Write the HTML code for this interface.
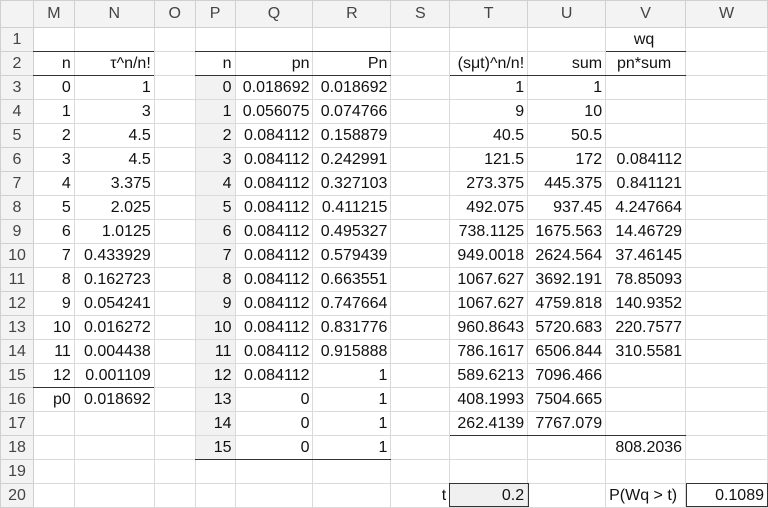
<!DOCTYPE html>
<html><head><meta charset="utf-8"><style>
body{margin:0;width:768px;height:506px;overflow:hidden;background:#fff;font-family:"Liberation Sans",sans-serif;}
table{border-collapse:collapse;table-layout:fixed;position:absolute;left:0;top:0;}
td{height:23px;border:1px solid #dadada;padding:0 3px 0 0;text-align:right;font-size:16px;color:#111;white-space:nowrap;overflow:hidden;line-height:22px;}
tr.h td{height:26px;background:#f3f3f3;color:#444;text-align:center;border-color:#d0d0d0;font-size:16px;padding:0;}
td.r{background:#f3f3f3;color:#444;text-align:center;border-color:#d0d0d0;padding:0;font-size:16px;}
td.p{background:#f2f2f2;}
td.c{text-align:center;}
.l{position:absolute;height:1px;background:#333;}
.b{position:absolute;border:1px solid #333;box-sizing:border-box;}
</style></head><body>
<table>
<colgroup><col style="width:33px"><col style="width:41px"><col style="width:80px"><col style="width:41px"><col style="width:40px"><col style="width:78px"><col style="width:78px"><col style="width:59px"><col style="width:78px"><col style="width:78px"><col style="width:80px"><col style="width:82px"></colgroup>
<tr class="h"><td></td><td>M</td><td>N</td><td>O</td><td>P</td><td>Q</td><td>R</td><td>S</td><td>T</td><td>U</td><td>V</td><td>W</td></tr>
<tr><td class="r">1</td><td></td><td></td><td></td><td></td><td></td><td></td><td></td><td></td><td></td><td class="c">wq</td><td></td></tr>
<tr><td class="r">2</td><td>n</td><td>τ^n/n!</td><td></td><td>n</td><td>pn</td><td>Pn</td><td></td><td>(sμt)^n/n!</td><td>sum</td><td class="c">pn*sum</td><td></td></tr>
<tr><td class="r">3</td><td>0</td><td>1</td><td></td><td class="p">0</td><td>0.018692</td><td>0.018692</td><td></td><td>1</td><td>1</td><td></td><td></td></tr>
<tr><td class="r">4</td><td>1</td><td>3</td><td></td><td class="p">1</td><td>0.056075</td><td>0.074766</td><td></td><td>9</td><td>10</td><td></td><td></td></tr>
<tr><td class="r">5</td><td>2</td><td>4.5</td><td></td><td class="p">2</td><td>0.084112</td><td>0.158879</td><td></td><td>40.5</td><td>50.5</td><td></td><td></td></tr>
<tr><td class="r">6</td><td>3</td><td>4.5</td><td></td><td class="p">3</td><td>0.084112</td><td>0.242991</td><td></td><td>121.5</td><td>172</td><td>0.084112</td><td></td></tr>
<tr><td class="r">7</td><td>4</td><td>3.375</td><td></td><td class="p">4</td><td>0.084112</td><td>0.327103</td><td></td><td>273.375</td><td>445.375</td><td>0.841121</td><td></td></tr>
<tr><td class="r">8</td><td>5</td><td>2.025</td><td></td><td class="p">5</td><td>0.084112</td><td>0.411215</td><td></td><td>492.075</td><td>937.45</td><td>4.247664</td><td></td></tr>
<tr><td class="r">9</td><td>6</td><td>1.0125</td><td></td><td class="p">6</td><td>0.084112</td><td>0.495327</td><td></td><td>738.1125</td><td>1675.563</td><td>14.46729</td><td></td></tr>
<tr><td class="r">10</td><td>7</td><td>0.433929</td><td></td><td class="p">7</td><td>0.084112</td><td>0.579439</td><td></td><td>949.0018</td><td>2624.564</td><td>37.46145</td><td></td></tr>
<tr><td class="r">11</td><td>8</td><td>0.162723</td><td></td><td class="p">8</td><td>0.084112</td><td>0.663551</td><td></td><td>1067.627</td><td>3692.191</td><td>78.85093</td><td></td></tr>
<tr><td class="r">12</td><td>9</td><td>0.054241</td><td></td><td class="p">9</td><td>0.084112</td><td>0.747664</td><td></td><td>1067.627</td><td>4759.818</td><td>140.9352</td><td></td></tr>
<tr><td class="r">13</td><td>10</td><td>0.016272</td><td></td><td class="p">10</td><td>0.084112</td><td>0.831776</td><td></td><td>960.8643</td><td>5720.683</td><td>220.7577</td><td></td></tr>
<tr><td class="r">14</td><td>11</td><td>0.004438</td><td></td><td class="p">11</td><td>0.084112</td><td>0.915888</td><td></td><td>786.1617</td><td>6506.844</td><td>310.5581</td><td></td></tr>
<tr><td class="r">15</td><td>12</td><td>0.001109</td><td></td><td class="p">12</td><td>0.084112</td><td>1</td><td></td><td>589.6213</td><td>7096.466</td><td></td><td></td></tr>
<tr><td class="r">16</td><td>p0</td><td>0.018692</td><td></td><td class="p">13</td><td>0</td><td>1</td><td></td><td>408.1993</td><td>7504.665</td><td></td><td></td></tr>
<tr><td class="r">17</td><td></td><td></td><td></td><td class="p">14</td><td>0</td><td>1</td><td></td><td>262.4139</td><td>7767.079</td><td></td><td></td></tr>
<tr><td class="r">18</td><td></td><td></td><td></td><td class="p">15</td><td>0</td><td>1</td><td></td><td></td><td></td><td>808.2036</td><td></td></tr>
<tr><td class="r">19</td><td></td><td></td><td></td><td></td><td></td><td></td><td></td><td></td><td></td><td></td><td></td></tr>
<tr><td class="r">20</td><td></td><td></td><td></td><td></td><td></td><td></td><td>t</td><td style="background:#f0f0f0">0.2</td><td></td><td style="text-align:left;padding-left:3px">P(Wq &gt; t)</td><td>0.1089</td></tr>
</table>
<div class="l" style="top:51px;left:33px;width:121px"></div>
<div class="l" style="top:51px;left:195px;width:196px"></div>
<div class="l" style="top:51px;left:606px;width:80px"></div>
<div class="l" style="top:75px;left:33px;width:121px"></div>
<div class="l" style="top:75px;left:195px;width:196px"></div>
<div class="l" style="top:75px;left:450px;width:236px"></div>
<div class="l" style="top:387px;left:33px;width:121px"></div>
<div class="l" style="top:459px;left:195px;width:196px"></div>
<div class="l" style="top:435px;left:450px;width:236px"></div>
<div class="b" style="top:483px;left:449px;width:80px;height:24px"></div>
<div class="b" style="top:483px;left:686px;width:82px;height:24px"></div>
</body></html>
